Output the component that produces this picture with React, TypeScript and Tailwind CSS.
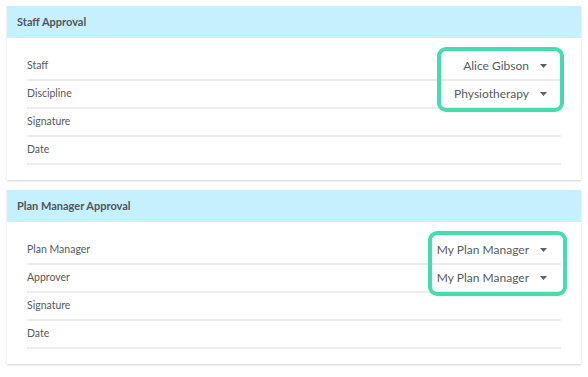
import { ReactNode } from 'react'

interface Row {
    label: string
    value?: string
}

interface Section {
    title: string
    rows: Row[]
    highlight: string
}

const sections: Section[] = [
    {
        title: 'Staff Approval',
        rows: [
            { label: 'Staff', value: 'Alice Gibson' },
            { label: 'Discipline', value: 'Physiotherapy' },
            { label: 'Signature' },
            { label: 'Date' },
        ],
        highlight: 'left-[430px] w-[127px]',
    },
    {
        title: 'Plan Manager Approval',
        rows: [
            { label: 'Plan Manager', value: 'My Plan Manager' },
            { label: 'Approver', value: 'My Plan Manager' },
            { label: 'Signature' },
            { label: 'Date' },
        ],
        highlight: 'left-[421px] w-[139px]',
    },
]

function Caret() {
    return (
        <svg width="7" height="4" viewBox="0 0 7 4" className="ml-[11px] shrink-0">
            <path d="M0 0 L7 0 L3.5 4 Z" fill="#5b6168" />
        </svg>
    )
}

function Card({ section, children }: { section: Section; children?: ReactNode }) {
    return (
        <div className="relative bg-white shadow-[0_1px_2px_rgba(0,0,0,0.18)]">
            {/* Header */}
            <div className="h-[32px] bg-[#c6f0fd] px-[10px] flex items-center">
                <h2 className="text-[11px] font-bold text-[#4f565d]">{section.title}</h2>
            </div>

            {/* Rows */}
            <div className="px-[20px] pt-[15px] pb-[15px]">
                {section.rows.map((row) => (
                    <div
                        key={row.label}
                        className="h-[28px] flex items-center justify-between border-b-2 border-[#ececec]"
                    >
                        <span className="text-[10.5px] text-[#555b61]">{row.label}</span>
                        {row.value && (
                            <span className="flex items-center pr-[14px] text-[12px] text-[#555b61]">
                                {row.value}
                                <Caret />
                            </span>
                        )}
                    </div>
                ))}
            </div>
            {children}
        </div>
    )
}

export default function App() {
    return (
        <div
            className="w-[588px] h-[377px] bg-white px-[7px] pt-[6px] flex flex-col gap-[10px]"
            style={{ fontFamily: 'Lato, "Open Sans", sans-serif' }}
        >
            {sections.map((section) => (
                <Card key={section.title} section={section}>
                    {/* Highlight annotation */}
                    <div
                        className={`absolute top-[41px] h-[65px] border-[4px] border-[#45dcb0] rounded-[9px] ${section.highlight}`}
                    />
                </Card>
            ))}
        </div>
    )
}
